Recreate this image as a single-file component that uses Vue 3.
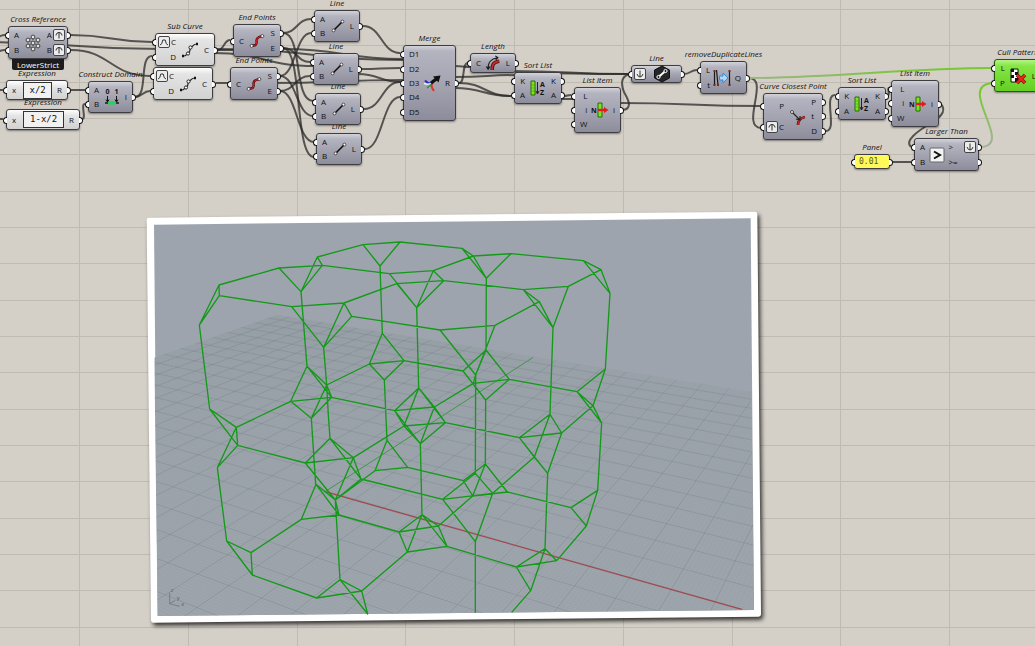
<template>
  <main class="canvas">
    <svg class="wires" aria-hidden="true">
      <!-- canvas grid -->
      <g class="canvas-grid">
        <line v-for="x in gridX" :key="'x' + x" :x1="x" y1="0" :x2="x" y2="100%" />
        <line v-for="y in gridY" :key="'y' + y" x1="0" :y1="y" x2="100%" :y2="y" />
      </g>
      <defs>
        <linearGradient id="fade-in" gradientUnits="userSpaceOnUse" x1="748" y1="0" x2="930" y2="0">
          <stop offset="0" stop-color="#9db487" />
          <stop offset="1" stop-color="#78c834" />
        </linearGradient>
        <linearGradient id="fade-up" gradientUnits="userSpaceOnUse" x1="0" y1="147" x2="0" y2="95">
          <stop offset="0" stop-color="#a6b398" />
          <stop offset="1" stop-color="#78c834" />
        </linearGradient>
      </defs>
      <path v-for="(w, i) in wires" :key="'w' + i" class="wire" :d="curve(w)" />
      <path class="wire" d="M941 104 C948 112 938 119 928 125 S904 141 911 147" />
      <path class="wire" d="M623 110 C634 108 627 98 624 92 C620 82 622 76 630 74" />
      <path class="wire" d="M749 78 C770 78 740 127 761 128" />
      <path class="green fade-in" d="M749 78 C830 78 910 68 992 68" />
      <path class="green fade-up" d="M982 147 C1014 144 956 86 992 83" />
    </svg>

    <section
      v-for="(node, i) in nodes"
      :key="i"
      class="node"
      :style="{ left: node.x + 'px', top: node.y + 'px', width: node.w + 'px', height: node.h + 'px' }"
    >
      <h2 v-if="node.title" class="title">{{ node.title }}</h2>
      <div class="body" :class="node.theme">
        <div class="ports inputs">
          <div v-for="(p, k) in node.inputs" :key="k" class="port">
            <svg v-if="p.tag" class="tag" viewBox="0 0 10 10"><path :d="tags[p.tag]" /></svg>
            <span>{{ p.name }}</span>
          </div>
        </div>
        <div class="center">
          <code v-if="node.text" class="expr">{{ node.text }}</code>
          <svg v-else-if="node.icon" class="icon" :class="node.icon" viewBox="0 0 18 18">
            <template v-if="node.icon === 'cross'">
              <path d="M9 3 14 6 14 12 9 15 4 12 4 6Z M4 6 14 12 M14 6 4 12 M9 3V15" stroke="#555" stroke-dasharray="1 1" />
              <circle v-for="c in crossDots" :key="c.join()" :cx="c[0]" :cy="c[1]" r="1.900" fill="#e4e4e4" stroke="#222" stroke-width=".8" />
            </template>
            <template v-else-if="node.icon === 'domain'">
              <path d="M2 15H16" stroke="#111" stroke-width="1.400" />
              <path d="M5 15H13" stroke="#1fd659" stroke-width="3" />
              <path d="M4.500 8V14M13.500 8V14M3 11.500 4.500 14 6 11.500M12 11.500 13.500 14 15 11.500" stroke="#111" />
              <text x="2.500" y="6" class="glyph">0</text>
              <text x="11.500" y="6" class="glyph">1</text>
            </template>
            <template v-else-if="node.icon === 'subcurve'">
              <path d="M2 15C6 15 5 13 7 12.500C10 12 8 6 11 5.500C13 5 12 3 16 3" stroke="#222" stroke-width="1.200" />
              <circle cx="7" cy="12.500" r="1.600" fill="#fff" stroke="#222" />
              <circle cx="9.500" cy="6.500" r="1.600" fill="#fff" stroke="#222" />
              <path d="M1 15H3M15 3H17" stroke="#111" stroke-width="2.500" />
            </template>
            <template v-else-if="node.icon === 'endpoints'">
              <path d="M3 14.500C8 14 9 13 8.500 9C8 5 12 4 15 3.500" stroke="#4d0808" stroke-width="2.600" />
              <path d="M3 14.500C8 14 9 13 8.500 9C8 5 12 4 15 3.500" stroke="#cf1d27" stroke-width="1.300" />
              <circle cx="3" cy="14.500" r="1.700" fill="#fff" stroke="#222" stroke-width=".8" />
              <circle cx="15" cy="3.500" r="1.700" fill="#fff" stroke="#222" stroke-width=".8" />
            </template>
            <template v-else-if="node.icon === 'line'">
              <path d="M4 14 14 4" stroke="#111" stroke-width="1.800" />
              <circle cx="4" cy="14" r="1.600" fill="#fff" stroke="#222" stroke-width=".8" />
              <circle cx="14" cy="4" r="1.600" fill="#fff" stroke="#222" stroke-width=".8" />
            </template>
            <template v-else-if="node.icon === 'merge'">
              <path d="M2 6.500C5 10 7 10 10 8" stroke="#2b2bd8" stroke-width="2" />
              <path d="M1 9.500C5 11 8 10 10 8" stroke="#eee" stroke-width="1.500" />
              <path d="M4 14C6 13 8 11 10 8" stroke="#1ba04c" stroke-width="1.500" />
              <path d="M11 17C8 13 8 10 10 8" stroke="#e33022" stroke-width="2" />
              <path d="M8 9 14 4.500" stroke="#111" stroke-width="3.400" />
              <path d="M10 2.500 17.500 1.500 15.500 8.500Z" fill="#111" />
            </template>
            <template v-else-if="node.icon === 'length'">
              <path d="M8 17C8 11 9 8 16 7" stroke="#4f1111" stroke-width="4" />
              <path d="M8 17C8 11 9 8 16 7" stroke="#c52b2b" stroke-width="2" />
              <path d="M3.500 16C3 9 7 4 14 3M11.500 1 14.500 3 12 5.500M1.500 13 3.500 16 5.500 13" stroke="#151515" stroke-width="1.200" />
            </template>
            <template v-else-if="node.icon === 'sort'">
              <path d="M2 2H6V16H2Z" fill="#7be51d" stroke="#2d6b08" />
              <path d="M2 6H6M2 9H6M2 12H6" stroke="#469b0e" stroke-width=".6" />
              <path d="M8.500 3V15M7 12 8.500 15 10 12" stroke="#222" />
              <text x="11" y="8" class="glyph">A</text>
              <text x="11" y="16" class="glyph">Z</text>
            </template>
            <template v-else-if="node.icon === 'item'">
              <path d="M7 2H11V16H7Z" fill="#7be51d" stroke="#2d6b08" />
              <path d="M7 9H14" stroke="#e21b1b" stroke-width="2.400" />
              <path d="M13 6 17.500 9 13 12Z" fill="#e21b1b" />
              <text x="0" y="12" class="glyph">N</text>
            </template>
            <template v-else-if="node.icon === 'hexline'">
              <path d="M9 1 16.500 5V13L9 17 1.500 13V5Z" fill="#262626" stroke="#111" />
              <path d="M5.500 12 12.500 6" stroke="#fff" stroke-width="2" />
              <circle cx="5.500" cy="12" r="1.600" fill="#262626" stroke="#fff" />
              <circle cx="12.500" cy="6" r="1.600" fill="#262626" stroke="#fff" />
            </template>
            <template v-else-if="node.icon === 'dedupe'">
              <path d="M1.500 2V16M3.500 1 5 16M16.500 2V16" stroke="#191919" stroke-width="1.200" />
              <path d="M1.500 1V3M1.500 15V17M5 15V17M16.500 1V3M16.500 15V17" stroke="#762b19" stroke-width="2" />
              <path d="M6.500 7H10V4L15 9 10 14V11H6.500Z" fill="#b3d4f3" stroke="#278fe8" />
            </template>
            <template v-else-if="node.icon === 'closest'">
              <path d="M9 17C9 13 11 10 16 9" stroke="#4f1111" stroke-width="2.600" />
              <path d="M9 17C9 13 11 10 16 9" stroke="#c52b2b" stroke-width="1.400" />
              <path d="M3 4 11 12M7 11 11 12 11 8" stroke="#222" stroke-width="1.100" />
              <circle cx="3" cy="4" r="1.500" fill="#fff" stroke="#222" stroke-width=".8" />
            </template>
            <template v-else-if="node.icon === 'larger'">
              <rect x="2" y="2" width="14" height="14" rx="1" fill="#f3f3f3" stroke="#666" />
              <path d="M6 5.500 12 9 6 12.500" stroke="#111" stroke-width="2" />
            </template>
            <template v-else-if="node.icon === 'cull'">
              <path d="M2 2H9V15H2Z" fill="#fff" stroke="#111" />
              <path d="M2 2H5V5H2ZM6 5H9V8H6ZM2 8H5V11H2ZM6 11H9V15H6Z" fill="#111" />
              <path d="M8 8 16 16M16 8 8 16" stroke="#7d0e0e" stroke-width="3.600" />
              <path d="M8 8 16 16M16 8 8 16" stroke="#e8261c" stroke-width="2.400" />
            </template>
          </svg>
        </div>
        <div class="ports outputs">
          <div v-for="(p, k) in node.outputs" :key="k" class="port">
            <span>{{ p.name }}</span>
            <svg v-if="p.tag" class="tag" viewBox="0 0 10 10"><path :d="tags[p.tag]" /></svg>
          </div>
        </div>
      </div>
      <p v-if="node.footer" class="footer">{{ node.footer }}</p>
    </section>

    <!-- viewport photo, drawn at three units per pixel -->
    <svg class="scene" viewBox="0 0 1860 1260" role="img" aria-label="Wireframe viewport">
      <defs>
        <clipPath id="floor-clip">
          <path d="M28 458 395 330 1819 561 1827 1215 38 1233Z" />
        </clipPath>
      </defs>
      <path class="frame" d="M12 38 1830 20Q1837 20 1837 27L1848 1228Q1848 1235 1841 1235L25 1253Q18 1253 18 1246L5 45Q5 38 12 38Z" />
      <path class="sky" d="M27 59 1817 40 1827 1215 38 1233Z" />
      <g clip-path="url(#floor-clip)">
        <path class="floor" d="M0 300H1860V1260H0Z" />
        <path class="minor" :d="floor.minor" />
        <path class="major" :d="floor.major" />
        <path class="axis-x" d="M540 860 1790 1213" />
        <path class="axis-y" d="M540 860 1163 458" />
      </g>
      <path class="mesh" :d="mesh" />
      <g class="gizmo">
        <path d="M74 1163V1196L104 1204M74 1196 91 1186" />
        <text x="77" y="1162">z</text>
        <text x="95" y="1184">y</text>
        <text x="109" y="1204">x</text>
      </g>
    </svg>
  </main>
</template>

<script setup>
defineOptions({
  name: 'DefinitionCanvas'
})

const gridX = Array.from({ length: 30 }, (_, i) => Math.round(79 + i * 108.75))
const gridY = Array.from({ length: 60 }, (_, i) => Math.round(9 + i * 36.33))

const tags = {
  graft: 'M5 8.500V2M2 5.500V5Q2.500 2.500 5 2.500Q7.500 2.500 8 5V5.500',
  flatten: 'M5 1.500V8M2 5Q3 8 5 8Q7 8 8 5',
  reparam: 'M1 8Q3 8 3.800 3H6.200Q7 8 9 8'
}

const crossDots = [[9, 3], [14, 6], [14, 12], [9, 15], [4, 12], [4, 6], [9, 9]]

// 'A:graft' -> { name, tag }
const ports = (...list) =>
  list.map((s) => {
    const [name, tag] = s.split(':')
    return { name, tag }
  })

const lineNode = (x, y) => ({
  title: 'Line', x, y, w: 46, h: 32, icon: 'line', inputs: ports('A', 'B'), outputs: ports('L')
})

const nodes = [
  { title: 'Cross Reference', x: 8, y: 26, w: 60, h: 33, icon: 'cross', inputs: ports('A', 'B'), outputs: ports('A:graft', 'B:graft'), footer: 'LowerStrict' },
  { title: 'Expression', x: 6, y: 80, w: 62, h: 20, theme: 'light', text: 'x/2', inputs: ports('x'), outputs: ports('R') },
  { title: 'Expression', x: 6, y: 109, w: 74, h: 21, theme: 'light', text: '1-x/2', inputs: ports('x'), outputs: ports('R') },
  { title: 'Construct Domain', x: 88, y: 81, w: 45, h: 32, icon: 'domain', inputs: ports('A', 'B'), outputs: ports('I') },
  { title: 'Sub Curve', x: 155, y: 33, w: 60, h: 33, theme: 'light', icon: 'subcurve', inputs: ports('C:reparam', 'D'), outputs: ports('C') },
  { x: 153, y: 67, w: 60, h: 33, theme: 'light', icon: 'subcurve', inputs: ports('C:reparam', 'D'), outputs: ports('C') },
  { title: 'End Points', x: 233, y: 24, w: 48, h: 33, icon: 'endpoints', inputs: ports('C'), outputs: ports('S', 'E') },
  { title: 'End Points', x: 230, y: 67, w: 48, h: 33, icon: 'endpoints', inputs: ports('C'), outputs: ports('S', 'E') },
  lineNode(314, 10),
  lineNode(313, 53),
  lineNode(315, 93),
  lineNode(316, 133),
  { title: 'Merge', x: 403, y: 45, w: 53, h: 76, icon: 'merge', inputs: ports('D1', 'D2', 'D3', 'D4', 'D5'), outputs: ports('R') },
  { title: 'Length', x: 470, y: 53, w: 46, h: 20, icon: 'length', inputs: ports('C'), outputs: ports('L') },
  { title: 'Sort List', x: 514, y: 72, w: 48, h: 32, icon: 'sort', inputs: ports('K', 'A'), outputs: ports('K', 'A') },
  { title: 'List Item', x: 574, y: 87, w: 47, h: 46, icon: 'item', inputs: ports('L', 'i', 'W'), outputs: ports('i') },
  { title: 'Line', x: 631, y: 65, w: 51, h: 18, icon: 'hexline', inputs: ports(':flatten'), outputs: ports('') },
  { title: 'removeDuplicateLines', x: 700, y: 61, w: 47, h: 33, icon: 'dedupe', inputs: ports('L', 't'), outputs: ports('Q') },
  { title: 'Curve Closest Point', x: 763, y: 93, w: 60, h: 47, icon: 'closest', inputs: ports('P', 'C:graft'), outputs: ports('P', 't', 'D') },
  { title: 'Sort List', x: 838, y: 87, w: 48, h: 33, icon: 'sort', inputs: ports('K', 'A'), outputs: ports('K', 'A') },
  { title: 'List Item', x: 891, y: 80, w: 48, h: 47, icon: 'item', inputs: ports('L', 'i', 'W'), outputs: ports('i') },
  { title: 'Larger Than', x: 914, y: 138, w: 65, h: 33, theme: 'wide', icon: 'larger', inputs: ports('A', 'B'), outputs: ports('>:flatten', '>=') },
  { title: 'Panel', x: 854, y: 154, w: 36, h: 15, theme: 'panel', text: '0.01', inputs: ports(''), outputs: ports('') },
  { title: 'Cull Pattern', x: 994, y: 59, w: 48, h: 33, theme: 'selected', icon: 'cull', inputs: ports('L', 'P'), outputs: ports('L') }
]

// x1, y1, x2, y2
const wires = [
  [-6, 38, 5, 35], [-20, 42, 160, 49], [-6, 52, 5, 50], [-6, 90, 3, 90], [-6, 119, 3, 119],
  [71, 35, 152, 42], [71, 50, 150, 76], [71, 90, 85, 90], [82, 119, 85, 104],
  [135, 97, 152, 56], [135, 97, 150, 91],
  [218, 50, 230, 40], [218, 50, 240, 50], [215, 49, 405, 60], [213, 53, 315, 66], [216, 83, 228, 83],
  [283, 33, 311, 19], [283, 48, 310, 62], [283, 33, 313, 101], [283, 48, 314, 157],
  [280, 76, 311, 33], [280, 91, 310, 76], [280, 76, 313, 116], [280, 91, 314, 142],
  [283, 49, 403, 59], [270, 83, 403, 80], [358, 74, 401, 82],
  [363, 26, 400, 53], [361, 69, 400, 68], [364, 109, 400, 82], [365, 149, 400, 97],
  [455, 66, 470, 67], [455, 77, 520, 75], [510, 71, 628, 74], [515, 73, 628, 74],
  [459, 83, 468, 63], [459, 83, 511, 96], [455, 88, 511, 96],
  [564, 96, 571, 95], [560, 99, 578, 99], [620, 103, 761, 106],
  [684, 74, 697, 70], [826, 131, 835, 95], [888, 95, 889, 88],
  [892, 162, 911, 162]
]

const curve = ([x1, y1, x2, y2]) => {
  const dx = Math.max(Math.abs(x2 - x1) / 2, Math.min(20, Math.abs(y2 - y1) / 3))
  return `M${x1} ${y1}C${x1 + dx} ${y1} ${x2 - dx} ${y2} ${x2} ${y2}`
}

// floor lines run through two vanishing points and are evenly spaced at the bottom edge
const fan = (vx, vy, origin, step, from, to) => {
  let d = ''
  for (let n = from; n <= to; n++) {
    const x = origin + n * step
    d += `M${vx} ${vy}L${vx + (x - vx) * 1.1} ${vy + (1233 - vy) * 1.1}`
  }
  return d
}
const floor = {
  major: fan(-3680, -340, 1863, 274, -9, 15) + fan(2494, -400, -38, 157, -15, 14),
  minor: fan(-3680, -340, 1863, 27.4, -90, 150) + fan(2494, -400, -38, 15.7, -150, 140)
}

const mesh = [
  // upper cells
  '163 360 222 240 402 189 532 181 733 206 865 197 985 153 1098 146 1315 167 1368 194 1395 265 1381 492',
  '163 360 223 272 222 240', '223 272 440 305 597 294 755 236 896 227 1135 254 1270 244 1368 194',
  '402 189 468 260 517 156 532 181 468 260 486 484',
  '517 156 654 119 765 111 951 130 985 153 1024 220 951 130', '654 119 705 183 765 111',
  '440 305 536 427 597 294 620 334 536 427 545 540 550 630 555 700',
  '620 334 705 347 885 375 1050 361 1183 290 1224 368 1135 254 1183 290',
  '705 183 712 385 673 477 718 525 777 467 673 477 545 540', '712 385 777 467 954 498',
  '1098 146 1024 220 1023 435', '1315 167 1395 265', '733 206 815 308 865 197 896 227 815 308 755 236',
  '1270 244 1224 368 1215 628', '885 375 992 510 1050 361',
  // middle band
  '163 360 194 612 274 667 278 721 194 612', '217 788 274 667 437 589', '217 788 278 721 481 774',
  '437 589 486 484 560 577 437 589 499 640 560 577 749 617', '486 484 545 540 560 577', '545 540 499 640 512 838',
  '1023 435 954 498 1022 585 1093 523 1023 435 992 510', '985 535 1093 523 1296 560 1381 492 1344 602 1296 560 1370 654 1344 602 1250 684',
  '992 510 985 535 868 606', '992 510 991 805', '1022 585 1021 777', '718 525 726 706',
  '815 308 821 549 749 617 868 606 821 549 901 653 868 606 826 716 749 617 777 663 821 549',
  '777 663 901 653 826 716 777 663 625 758', '901 653 1123 698 1215 628 1250 684 1123 698 1168 756 1215 628',
  '1123 698 1208 805 1168 756 1043 865', '1250 684 1208 805 1200 1031',
  '555 700 481 774 625 758 555 700 648 822 625 758 571 885 481 774', '571 885 648 822 893 883',
  '571 885 690 797 788 787 726 706 690 797', '788 787 955 827',
  // lower cells
  '217 788 245 1008 318 1043 322 1110 245 1008', '318 1043 469 943 513 838 582 930 469 943',
  '513 838 571 885 582 930 762 981', '322 1110 515 1179 650 1158 585 1124 515 1179',
  '571 885 585 1124 668 1227 650 1158 787 1041',
  '1021 777 955 827 983 873 1021 777 1087 861 983 873 880 963', '1087 861 1278 908 1324 963 1235 1067',
  '991 805 893 883 1043 865 991 805', '893 883 991 1010 1043 865', '991 1010 991 1223',
  '1370 654 1358 856 1278 908', '1358 856 1324 963',
  '826 716 831 929 762 981 787 1041 831 929 880 963 762 981', '831 929 906 1024 880 963',
  '787 1041 906 1024 1114 1086 1235 1067 1200 1031 1114 1086 1157 1157 1200 1031', '1157 1157 1100 1222'
]
  .map((p) => 'M' + p)
  .join('')
</script>

<style>
body {
  margin: 0;
  background: #d4cfc7;
}
</style>

<style scoped>
.canvas {
  position: relative;
  width: 100%;
  min-height: 100vh;
  overflow: hidden;
  background: #d4cfc7;
  color: #111;
  font-family: 'Open Sans', 'Noto Sans', sans-serif;
  font-variant-ligatures: none;
}

.wires {
  position: absolute;
  inset: 0;
  width: 100%;
  height: 100%;
}

.canvas-grid line {
  stroke: #bfbab2;
  stroke-width: 1;
  shape-rendering: crispEdges;
}

.wire {
  fill: none;
  stroke: #2a2a28;
  stroke-width: 2;
  stroke-opacity: 0.75;
}

.green {
  fill: none;
  stroke-width: 2;
}

.fade-in {
  stroke: url(#fade-in);
}

.fade-up {
  stroke: url(#fade-up);
}

/* nodes */
.node {
  position: absolute;
}

.title {
  position: absolute;
  z-index: 1;
  bottom: 100%;
  left: 50%;
  margin: 0 0 2px;
  transform: translateX(-50%);
  font-size: 8px;
  font-style: italic;
  font-weight: 400;
  line-height: 10px;
  white-space: nowrap;
}

.body {
  position: relative;
  z-index: 2;
  display: flex;
  box-sizing: border-box;
  height: 100%;
  padding: 1px 0;
  border: 1px solid #3d3d42;
  border-radius: 3px;
  background: linear-gradient(#d2d2da 0, #b4b4c0 5px, #a5a5b2 50%, #8c8c9b 100%);
  box-shadow: 0 1px 2px rgba(0, 0, 0, 0.4);
}

.body.light {
  background: linear-gradient(#fff 0, #e4e4e4 6px, #d2d2d2 100%);
}

.body.selected {
  border-color: #225c08;
  background: linear-gradient(#b4f484 0, #85e645 6px, #65cf22 100%);
}

.body.panel {
  padding: 0;
  background: #fffa5a;
}

.ports {
  display: flex;
  flex-direction: column;
}

.port {
  position: relative;
  display: flex;
  flex: 1;
  align-items: center;
  gap: 4px;
  padding: 0 5px;
  font-size: 8px;
  line-height: 10px;
}

.wide .outputs .port {
  gap: 14px;
}

.panel .port {
  padding: 0 2px;
}

.inputs .port {
  justify-content: flex-end;
}

.port::before {
  content: '';
  position: absolute;
  top: 50%;
  width: 3px;
  height: 5px;
  margin-top: -3px;
  border: 1px solid #111;
  background: #fff;
}

.inputs .port::before {
  left: -4px;
  border-right: 0;
  border-radius: 4px 0 0 4px;
}

.outputs .port::before {
  right: -4px;
  border-left: 0;
  border-radius: 0 4px 4px 0;
}

.tag {
  box-sizing: border-box;
  flex: none;
  width: 12px;
  height: 12px;
  margin: 0 -3px;
  border: 1px solid #444;
  border-radius: 2px;
  background: #ececec;
}

.tag path {
  fill: none;
  stroke: #333;
}

.center {
  display: flex;
  flex: 1;
  align-items: center;
  justify-content: center;
  min-width: 0;
}

.icon {
  flex: none;
  width: 18px;
  height: 18px;
  fill: none;
}

.icon.length,
.icon.line,
.icon.endpoints {
  width: 16px;
  height: 16px;
}

.glyph {
  fill: #111;
  font-size: 7px;
  font-weight: 700;
}

.expr {
  flex: 1;
  margin-left: 2px;
  border: 1px solid #333;
  background: #f1f1f1;
  font-family: 'DejaVu Sans Mono', monospace;
  font-size: 9px;
  line-height: 15px;
  text-align: center;
}

.panel .expr {
  margin: 0;
  border: 0;
  background: none;
  color: #55551c;
  font-size: 8px;
  line-height: 12px;
  text-align: left;
}

.footer {
  position: absolute;
  z-index: 2;
  top: 100%;
  left: 4px;
  right: 4px;
  margin: 0;
  border-radius: 0 0 2px 2px;
  background: #1c1c1c;
  color: #fff;
  font-size: 8px;
  line-height: 11px;
  text-align: center;
}

/* viewport */
.scene {
  position: absolute;
  top: 205px;
  left: 145px;
  width: 620px;
  height: 420px;
  overflow: visible;
  fill: none;
}

.frame {
  fill: #fff;
  filter: drop-shadow(6px 9px 7px rgba(0, 0, 0, 0.75));
}

.sky {
  fill: #9ea4ad;
}

.floor {
  fill: #9ea5ad;
}

.minor {
  stroke: #7d858e;
  stroke-width: 1;
  stroke-opacity: 0.16;
}

.major {
  stroke: #717982;
  stroke-width: 3;
  stroke-opacity: 0.28;
}

.axis-x {
  stroke: #a04a50;
  stroke-width: 4;
}

.axis-y {
  stroke: #469a50;
  stroke-width: 3;
}

.mesh {
  stroke: #129a18;
  stroke-width: 4;
  stroke-linejoin: round;
}

.gizmo {
  stroke: #666b72;
  stroke-width: 2;
}

.gizmo text {
  fill: #555a61;
  stroke: none;
  font-size: 17px;
}
</style>
